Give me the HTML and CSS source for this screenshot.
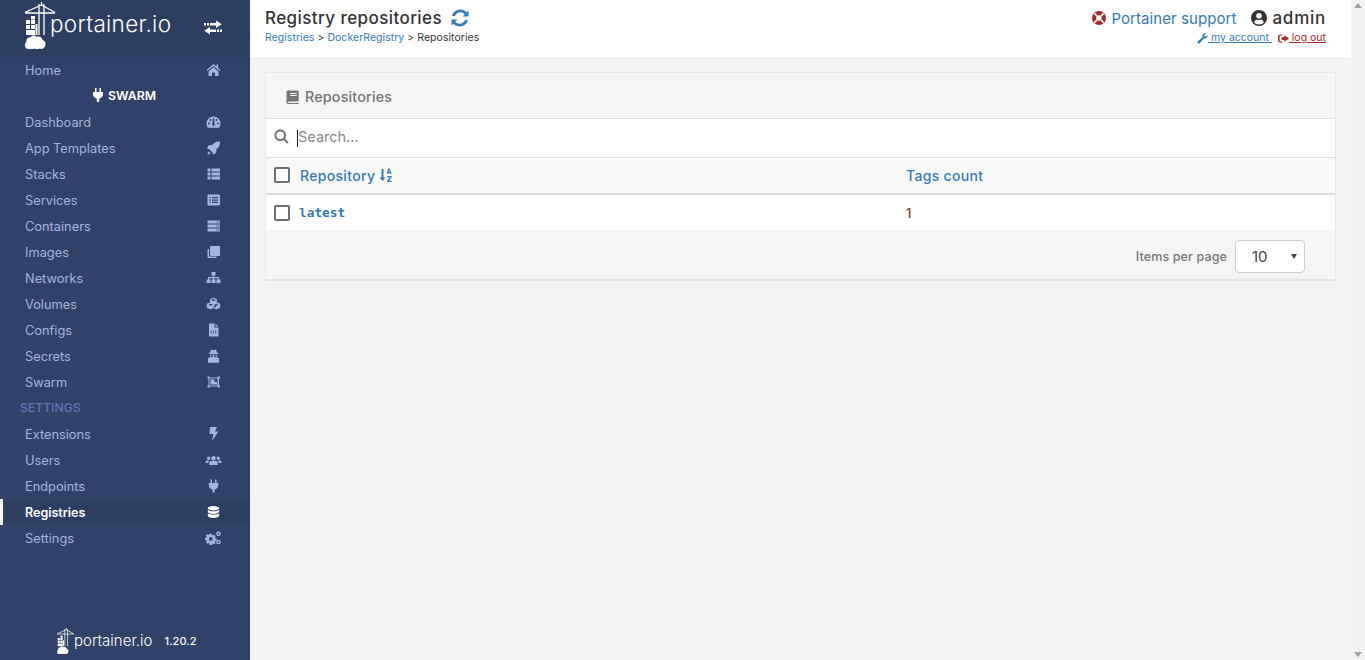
FILE: index.html
```html
<!DOCTYPE html>
<html lang="en">
<head>
<meta charset="utf-8">
<title>Registry repositories</title>
<link rel="stylesheet" href="styles.css">
</head>
<body>
<svg class="defs" width="0" height="0" aria-hidden="true">
  <defs>
    <g id="crane" fill="none" stroke="currentColor">
      <path d="M0 10.500 L16.500 3 L30 10.500 M0 11 H30 M14 2 V33 M19 2 V33 M16.500 0 V4" stroke-width="1.300"/>
      <path d="M1 18h4v4h-4zM6 18h4v4h-4zM1 23h4v4h-4zM6 23h4v4h-4zM6 14h4v3.500h-4zM1 28h9v5h-9zM10.500 22h2v11h-2z" fill="currentColor" stroke="none"/>
      <path d="M3.500 47c-2.400 0-3.500-1.600-3.500-3.800 0-1.700.6-2.800 1.500-3.400-.4-2.800 1.800-5 4-4.500 1.200-2 4.500-2.500 6-.4 2.500-1.100 5.500.2 6 3.100 2 .7 3 2.200 3 4 0 2.700-1.700 4.900-4 4.900-1 0-1.500-.2-2-.5-.5.400-1.500.6-2.500.6-1 0-2-.2-2.500-.6-.7.400-1.500.6-2.500.6z" fill="currentColor" stroke="none"/>
    </g>
  </defs>
</svg>
<div class="app">
  <aside class="sidebar">
    <div class="brand">
      <span class="logo">
        <svg class="crane" width="34" height="47" viewBox="0 0 34 47"><use href="#crane"/></svg>
        <span class="logo-text">portainer.io</span>
      </span>
      <svg class="swap" width="18" height="15" viewBox="0 0 18 15" fill="currentColor"><path d="M0 3h2v2.500H0zM3 3h2v2.500H3zM6 3h6V0.500L17.800 4.200 12 8V5.500H6zM18 9.500V12h-2V9.500zM15 9.500V12h-2V9.500zM12 9.500H6V7L.2 10.800 6 14.500V12h6z"/></svg>
    </div>
    <ul class="nav">
      <li class="item"><span>Home</span>
        <svg class="ic" viewBox="0 0 14 14"><path fill="currentColor" d="M7 1 0 7l.8 1L7 3l6.200 5 .8-1-2.500-2.200V1.500H10v2L7 1zM2 8.500V13h3.500V9.500h3V13H12V8.500L7 4.300z"/></svg></li>
      <li class="endpoint">
        <svg class="ic-small" viewBox="0 0 10 14"><path fill="currentColor" d="M2 0h1.500v4h3V0H8v4h2v2c0 2.500-1.500 4.200-3.800 4.500V14H3.800v-3.500C1.500 10.200 0 8.500 0 6V4h2z"/></svg>
        <span>SWARM</span></li>
      <li class="item"><span>Dashboard</span>
        <svg class="ic" viewBox="0 0 14 14"><path fill="currentColor" fill-rule="evenodd" d="M7 1.500a7 7 0 0 1 7 7c0 1.600-.5 3-1.400 4.200H1.400A7 7 0 0 1 0 8.500a7 7 0 0 1 7-7zM2.500 7.500a1 1 0 1 0 0 2 1 1 0 0 0 0-2zM4 4a1 1 0 1 0 0 2 1 1 0 0 0 0-2zM10 4a1 1 0 1 0 0 2 1 1 0 0 0 0-2zM11.500 7.500a1 1 0 1 0 0 2 1 1 0 0 0 0-2zM7.700 3.500h-1.400l-.3 5.200a1.300 1.300 0 1 0 2 0z"/></svg></li>
      <li class="item"><span>App Templates</span>
        <svg class="ic" viewBox="0 0 14 14"><path fill="currentColor" d="M13.500 0.500c.3 3.500-1 6-3.500 7.800l-.3 3.700L6.500 13.500l-.7-2.200-3-3L.5 7.500 2 4.300l3.700-.3C7.500 1.500 10 .2 13.500.5zM2.500 10.500c-1 .7-1.500 1.800-1.500 3 1.200 0 2.300-.5 3-1.500z"/></svg></li>
      <li class="item"><span>Stacks</span>
        <svg class="ic" viewBox="0 0 14 14"><path fill="currentColor" d="M1 1.500h3v3H1zM5 1.500h8.500v3H5zM1 5.500h3v3H1zM5 5.500h8.500v3H5zM1 9.500h3v3H1zM5 9.500h8.500v3H5z"/></svg></li>
      <li class="item"><span>Services</span>
        <svg class="ic" viewBox="0 0 14 14"><path fill="currentColor" fill-rule="evenodd" d="M2 1.500h10.500a1 1 0 0 1 1 1v9a1 1 0 0 1-1 1H2a1 1 0 0 1-1-1v-9a1 1 0 0 1 1-1zM3 4v1.300h1.500V4zM5.500 4v1.300H11.500V4zM3 6.400v1.300h1.500V6.400zM5.500 6.400v1.300H11.500V6.400zM3 8.800v1.300h1.500V8.800zM5.500 8.800v1.300H11.500V8.800z"/></svg></li>
      <li class="item"><span>Containers</span>
        <svg class="ic" viewBox="0 0 14 14"><path fill="currentColor" fill-rule="evenodd" d="M1 1.500h12.500v3H1zM1 5.500h12.500v3H1zM1 9.500h12.500v3H1zM10 2.600v.8h1v-.8zM12 2.600v.8h1v-.8zM10 6.600v.8h1v-.8zM12 6.600v.8h1v-.8zM10 10.600v.8h1v-.8zM12 10.600v.8h1v-.8z"/></svg></li>
      <li class="item"><span>Images</span>
        <svg class="ic" viewBox="0 0 14 14"><path fill="currentColor" d="M4.500 1h8a1 1 0 0 1 1 1v8a1 1 0 0 1-1 1h-8a1 1 0 0 1-1-1V2a1 1 0 0 1 1-1zM2.500 4v7.500H10V13H2a1 1 0 0 1-1-1V5a1 1 0 0 1 1-1z"/></svg></li>
      <li class="item"><span>Networks</span>
        <svg class="ic wide" viewBox="0 0 16 14"><path fill="currentColor" d="M6 1h4v3.500H8.500V6H13.500v2.500H15V12h-4V8.500h1.300V7.200H8.600v1.300H10V12H6V8.500h1.400V7.200H3.700v1.300H5V12H1V8.500h1.500V6h5V4.500H6z"/></svg></li>
      <li class="item"><span>Volumes</span>
        <svg class="ic" viewBox="0 0 14 14"><path fill="currentColor" fill-rule="evenodd" d="M7 .8l3.400 1.300v3.400l3.300 1.300v3.900L10 12.400 7 11l-3 1.400-3.700-1.600V6.800l3.300-1.300V2.100zM4.500 3l2.500 1 2.500-1L7 2zM7.500 8.700v2l2.200-1v-2zM4.200 6.800l2.300.9-2.300 1-2.300-1zM9.800 6.800l2.300.9-2.300 1-2.300-1z"/></svg></li>
      <li class="item"><span>Configs</span>
        <svg class="ic" viewBox="0 0 14 14"><path fill="currentColor" fill-rule="evenodd" d="M2.500 0.500h5.500v4h4v9h-9.500zM9 .8 11.800 3.500H9zM5.200 7.300 3.700 9l1.500 1.700.5-.5L4.700 9l1-1.200zM8.800 7.300l-.5.5 1 1.200-1 1.200.5.500L10.300 9zM7.400 6.700 6 11.300h.6l1.400-4.600z"/></svg></li>
      <li class="item"><span>Secrets</span>
        <svg class="ic" viewBox="0 0 14 14"><path fill="currentColor" fill-rule="evenodd" d="M4.500.500 7 1.200 9.500.500l1 3.300h1.300V5H2.200V3.800h1.300zM3.500 5.800h7v2.500l.7.500h1.300v5h-11v-5h1.300l.7-.5zM4.200 6.600v1.300h2.300V6.600zM7.500 6.600v1.300h2.300V6.600z"/></svg></li>
      <li class="item"><span>Swarm</span>
        <svg class="ic" viewBox="0 0 14 14"><path fill="currentColor" fill-rule="evenodd" d="M1 1.500h2v1h8v-1h2.500v2h-1v7h1v2h-2v-1h-8v1H1v-2h1v-7H1zM3 3.500v7h8v-7zM4 4.500h4V7h2.500v2.500H4z"/></svg></li>
      <li class="section">SETTINGS</li>
      <li class="item"><span>Extensions</span>
        <svg class="ic" viewBox="0 0 14 14"><path fill="currentColor" d="M3.500 0H10.500L8.500 4.500H12L5.500 14l1.300-7H3z"/></svg></li>
      <li class="item"><span>Users</span>
        <svg class="ic wide" viewBox="0 0 16 14"><path fill="currentColor" d="M8 3a2.200 2.200 0 1 1 0 4.400A2.200 2.200 0 0 1 8 3zM3.200 3.500a1.700 1.700 0 1 1 0 3.400 1.700 1.700 0 0 1 0-3.400zM12.800 3.500a1.700 1.700 0 1 1 0 3.400 1.700 1.700 0 0 1 0-3.400zM5.500 8h5c1 0 1.700.8 1.700 2v2H3.800v-2c0-1.200.7-2 1.700-2zM1.500 7.500h2.200C3 8.200 2.900 9 2.900 10H0V9c0-1 .5-1.500 1.500-1.500zM12.300 7.500h2.200c1 0 1.500.5 1.500 1.500v1h-2.900c0-1-.1-1.800-.8-2.500z"/></svg></li>
      <li class="item"><span>Endpoints</span>
        <svg class="ic" viewBox="0 0 14 14"><path fill="currentColor" d="M4 .5h1.500v3.500h3V.5H10v3.500h1.800v2c0 2.500-1.500 4.200-3.800 4.500v3H6v-3C3.700 10.200 2.200 8.500 2.200 6V4H4z"/></svg></li>
      <li class="item active"><span>Registries</span>
        <svg class="ic" viewBox="0 0 14 14"><path fill="currentColor" d="M7 1c3.200 0 5.700 1 5.700 2.200S10.200 5.400 7 5.400 1.300 4.400 1.300 3.200 3.800 1 7 1zM1.300 4.700C2.500 5.800 4.500 6.200 7 6.200s4.500-.4 5.700-1.500v2C12.700 7.900 10.200 8.900 7 8.900S1.300 7.900 1.300 6.700zM1.300 8.300C2.500 9.300 4.500 9.700 7 9.700s4.500-.4 5.700-1.400v2.500c0 1.200-2.500 2.200-5.700 2.200s-5.700-1-5.700-2.200z"/></svg></li>
      <li class="item"><span>Settings</span>
        <svg class="ic wide" viewBox="0 0 16 14"><path fill="currentColor" fill-rule="evenodd" d="M4.300 2.800h2l.3 1.200 1 .4 1.100-.6 1.400 1.400-.6 1.100.4 1 1.200.3v2l-1.200.3-.4 1 .6 1.100-1.400 1.400-1.100-.6-1 .4-.3 1.200h-2L4 12.500l-1-.4-1.100.6L.5 11.300l.6-1.100-.4-1L-.5 8.900v-2l1.200-.3.4-1-.6-1.100L1.900 3.100l1.100.6 1-.4zM5.300 6a1.900 1.900 0 1 0 0 3.800 1.900 1.900 0 0 0 0-3.800zM13 .5a2.300 2.300 0 1 1 0 4.600 2.300 2.300 0 0 1 0-4.600zM13 1.900a.9.900 0 1 0 0 1.800.9.900 0 0 0 0-1.800zM13 8.700a2.300 2.300 0 1 1 0 4.600 2.300 2.300 0 0 1 0-4.600zM13 10.100a.9.900 0 1 0 0 1.800.9.900 0 0 0 0-1.800z"/></svg></li>
    </ul>
    <div class="foot">
      <svg class="crane-small" width="19" height="26" viewBox="0 0 34 47"><use href="#crane"/></svg>
      <span class="foot-logo">portainer.io</span>
      <span class="version">1.20.2</span>
    </div>
  </aside>
  <div class="main">
    <header class="top">
      <div class="top-left">
        <div class="title-row">
          <h1 class="title">Registry repositories</h1>
          <svg class="refresh" viewBox="0 0 18 18"><path fill="currentColor" d="M17.500 1.500v6h-6l2.300-2.300A5.700 5.700 0 0 0 9.300 3.200c-2.400 0-4.500 1.500-5.300 3.800L1 6.700C2.100 3 5.400.500 9.300.500c2.300 0 4.600 1 6.300 2.700zM.500 16.500v-6h6l-2.300 2.300a5.700 5.700 0 0 0 4.500 2c2.400 0 4.500-1.500 5.300-3.800l3 .3c-1.100 3.700-4.400 6.200-8.300 6.200-2.300 0-4.600-1-6.300-2.700z"/></svg>
        </div>
        <div class="crumbs"><a class="link">Registries</a> &gt; <a class="link">DockerRegistry</a> &gt; Repositories</div>
      </div>
      <div class="top-right">
        <div class="user-row">
          <a class="support">
            <svg class="lifebuoy" viewBox="0 0 14 14"><path fill="currentColor" fill-rule="evenodd" d="M7 0a7 7 0 1 1 0 14A7 7 0 0 1 7 0zM7 4.200a2.800 2.800 0 1 0 0 5.600 2.800 2.800 0 0 0 0-5.600z"/><path stroke="#fff" stroke-width="1.700" d="M2.300 2.300 5 5M11.700 2.300 9 5M2.300 11.700 5 9M11.700 11.700 9 9"/></svg>
            <span>Portainer support</span>
          </a>
          <span class="admin">
            <svg class="user-ic" viewBox="0 0 16 16"><path fill="currentColor" fill-rule="evenodd" d="M8 0a8 8 0 1 1 0 16A8 8 0 0 1 8 0zM8 3a2.800 2.800 0 1 0 0 5.600A2.800 2.800 0 0 0 8 3zM3.200 12.800A6.500 6.500 0 0 0 8 14.600a6.500 6.500 0 0 0 4.800-1.800C12.600 10.800 11.300 9.500 10 9.400 9.400 9.800 8.700 10 8 10s-1.400-.2-2-.6c-1.300.1-2.600 1.400-2.800 3.400z"/></svg>
            <span>admin</span>
          </span>
        </div>
        <div class="account-row">
          <a class="account">
            <svg class="mini" viewBox="0 0 12 12"><path fill="currentColor" d="M11.500 3c0 1.800-1.300 3.200-3 3.200-.4 0-.7 0-1-.2L3 11.200c-.6.600-1.500.6-2.100 0-.6-.6-.6-1.500 0-2.100L6 4.500c-.1-.3-.2-.6-.2-1C5.800 1.700 7.200.3 9 .3c.4 0 .7.100 1 .2L8 2.500l.3 1.300 1.300.3L11.400 2.200c.1.300.1.500.1.800z"/></svg><span> my account </span></a>
          <a class="logout">
            <svg class="mini" viewBox="0 0 12 12"><path fill="currentColor" d="M4.500 2.800H2.500c-.5 0-.8.300-.8.800v4.800c0 .5.300.8.800.8h2v1.300h-2C1.100 10.500 0 9.600 0 8.300V3.700C0 2.400 1.100 1.500 2.500 1.500h2zM7 2.500l5 3.500-5 3.500V7.700H4V4.300h3z"/></svg><span> log out</span></a>
        </div>
      </div>
    </header>
    <main class="content">
      <section class="panel">
        <div class="panel-head">
          <svg class="book" viewBox="0 0 13 14"><path fill="currentColor" fill-rule="evenodd" d="M2.200.500h9.300c.7 0 1.200.500 1.200 1.200v8.800c0 .5-.4.900-.9.900H3c-.6 0-1 .3-1 .8s.4.800 1 .8h9.700v1H2.500C1.200 14 .5 13.200.5 12V2.200C.5 1.200 1.200.500 2.200.500zM4 3v1h6.700V3zM4 5v1h6.700V5z"/></svg>
          <span>Repositories</span>
        </div>
        <div class="search">
          <svg class="search-ic" viewBox="0 0 14 14"><path fill="none" stroke="currentColor" stroke-width="2" d="M5.800 1.300a4.500 4.500 0 1 1 0 9 4.500 4.500 0 0 1 0-9zM9 9l4 4"/></svg>
          <span class="caret"></span>
          <span class="placeholder">Search...</span>
        </div>
        <div class="row head-row">
          <div class="cell first"><span class="check"></span>
            <a class="col-link">Repository</a>
            <svg class="sort" viewBox="0 0 13 14"><path fill="currentColor" d="M2.500 1h2v8.500h2L3.500 13 .5 9.500h2zM9.400 .5h1.200l2.200 5.500h-1.400l-.4-1.100H9.600L9.200 6H7.800zM10 1.900l-.1 1.900h1.200zM8.200 8h4.500v1l-2.800 3.800h2.900V14H8v-1l2.800-3.800H8.200z"/></svg>
          </div>
          <div class="cell second"><a class="col-link">Tags count</a></div>
        </div>
        <div class="row body-row">
          <div class="cell first"><span class="check"></span>
            <a class="mono">latest</a></div>
          <div class="cell second"><span class="count">1</span></div>
        </div>
        <div class="panel-foot">
          <span class="per">Items per page</span>
          <div class="select"><span>10</span><i class="arrow"></i></div>
        </div>
      </section>
    </main>
  </div>
  <div class="scrollbar"><i class="up"></i><i class="down"></i></div>
</div>
</body>
</html>
```
FILE: styles.css
```css
* { box-sizing: border-box; }
html, body { margin: 0; height: 100%; overflow: hidden; }
body { font-family: Inter, "Liberation Sans", sans-serif; font-size: 13px; color: #333; }
.defs { display: block; height: 0; }
.app { display: flex; height: 660px; }

.sidebar { width: 250px; flex: none; background: #30426a; display: flex; flex-direction: column; }
.brand { height: 57px; background: #2d3e63; color: #fff; display: flex; align-items: center; justify-content: space-between; padding: 0 28px 2px 25px; }
.logo { display: flex; align-items: flex-start; height: 48px; margin-top: -1px; }
.crane { display: block; margin-top: -1px; }
.logo-text { font-size: 22.500px; font-weight: 300; line-height: 26px; margin: 8px 0 0 -9px; letter-spacing: .3px; }
.swap { display: block; }

.nav { list-style: none; margin: 0; padding: 0; flex: 1; }
.item { height: 26px; display: flex; align-items: center; justify-content: space-between; padding: 0 29px 0 25px; color: #a3b6de; font-size: 12.800px; border-left: 0 solid #fff; }
.item .ic { width: 15px; height: 14px; display: block; flex: none; }
.item .wide { width: 17px; margin-right: -1px; }
.active { background: #2d3e63; color: #fff; font-weight: 600; font-size: 12.500px; border-left-width: 3px; padding-left: 22px; }
.endpoint { height: 26px; display: flex; align-items: center; justify-content: center; gap: 5px; color: #fff; font-weight: 600; font-size: 12.300px; padding: 0 1px 2px 0; }
.ic-small { width: 10px; height: 14px; display: block; }
.section { height: 26px; line-height: 26px; padding-left: 20px; color: #5d78b3; font-size: 12.200px; font-weight: 500; }

.foot { height: 38px; display: flex; align-items: flex-start; color: #fff; padding: 6px 0 0 57px; }
.crane-small { display: block; flex: none; }
.foot-logo { font-size: 15px; font-weight: 300; margin: 4px 0 0 -2px; line-height: 18px; }
.version { font-size: 11px; font-weight: 500; margin: 4px 0 0 12px; line-height: 18px; letter-spacing: .1px; }

.main { flex: 1; min-width: 0; background: #f3f3f3; display: flex; flex-direction: column; }
.top { height: 57px; flex: none; background: #fff; display: flex; justify-content: space-between; padding: 0 25px 0 15px; }
.top-left { padding-top: 7px; }
.title-row { display: flex; align-items: center; gap: 9px; height: 22px; }
.title { margin: 0; font-size: 17px; font-weight: 500; color: #333; line-height: 22px; letter-spacing: .42px; }
.refresh { width: 18px; height: 18px; color: #337ab7; display: block; }
.crumbs { font-size: 10.500px; color: #333; margin-top: 2px; line-height: 14px; letter-spacing: .04px; }
.link { color: #337ab7; }

.top-right { display: flex; flex-direction: column; align-items: flex-end; padding-top: 7px; }
.user-row { display: flex; align-items: center; height: 22px; gap: 15px; font-size: 15px; }
.support { display: flex; align-items: center; gap: 5px; color: #337ab7; letter-spacing: .07px; }
.lifebuoy { width: 14px; height: 14px; color: #a52a2a; display: block; }
.admin { display: flex; align-items: center; gap: 5px; color: #333; font-size: 17px; font-weight: 500; letter-spacing: .75px; }
.user-ic { width: 16px; height: 16px; display: block; }
.account-row { display: flex; gap: 6px; font-size: 10.500px; line-height: 14px; margin-top: 2px; }
.account, .logout { text-decoration: underline; display: flex; align-items: center; white-space: pre; }
.account { color: #337ab7; }
.logout { color: #a52a2a; }
.mini { width: 11px; height: 11px; display: block; }

.content { padding: 15px 15px 0; }
.panel { background: #f5f5f5; border: 1px solid #e8e8e8; border-bottom: 2px solid #e4e4e4; height: 209px; }
.panel-head { height: 46px; display: flex; align-items: center; padding: 2px 0 0 20px; gap: 6px; color: #767676; font-size: 14.300px; font-weight: 500; letter-spacing: .18px; border-bottom: 1px solid #ddd; }
.book { width: 13px; height: 14px; display: block; }
.search { height: 39px; background: #fff; display: flex; align-items: center; padding: 0 0 3px 8px; border-bottom: 1px solid #ddd; color: #767676; font-size: 14.500px; }
.search-ic { width: 15px; height: 15px; display: block; }
.caret { width: 1px; height: 17px; background: #222; margin: 3px 0 0 8px; }
.placeholder { color: #8a8a8a; font-size: 14.500px; }
.row { display: flex; align-items: center; }
.head-row { height: 37px; padding-bottom: 1px; background: #f9f9f9; border-bottom: 2px solid #ddd; }
.body-row { height: 35px; background: #fff; }
.cell { display: flex; align-items: center; }
.first { width: 640px; padding-left: 8px; }
.second { flex: 1; }
.check { width: 16px; height: 16px; border: 2px solid #6e6e6e; border-radius: 2px; background: #fff; flex: none; margin-right: 10px; }
.col-link { color: #337ab7; font-weight: 500; font-size: 14px; letter-spacing: .32px; }
.sort { width: 13px; height: 14px; color: #337ab7; margin-left: 4px; display: block; }
.mono { font-family: "DejaVu Sans Mono", monospace; color: #337ab7; font-weight: 700; font-size: 12.800px; margin-left: -1px; }
.count { color: #8a3b12; font-size: 13px; font-weight: 500; }
.panel-foot { display: flex; align-items: center; justify-content: flex-end; height: 48px; padding: 4px 30px 0 0; gap: 8px; }
.per { color: #767676; font-size: 12.500px; font-weight: 500; letter-spacing: .12px; }
.select { width: 70px; height: 33px; background: #fff; border: 1px solid #ccc; border-radius: 4px; display: flex; align-items: center; justify-content: space-between; padding: 0 7px 0 16px; color: #444; font-size: 15px; }
.arrow { width: 0; height: 0; border: 3.500px solid transparent; border-top: 5px solid #444; border-bottom: 0; }

.scrollbar { width: 14px; flex: none; background: #f1f1f1; display: flex; flex-direction: column; justify-content: space-between; align-items: center; padding: 3px 0; }
.up { width: 0; height: 0; border: 4px solid transparent; border-bottom: 5px solid #a3a3a3; border-top: 0; }
.down { width: 0; height: 0; border: 4px solid transparent; border-top: 5px solid #a3a3a3; border-bottom: 0; }
```
